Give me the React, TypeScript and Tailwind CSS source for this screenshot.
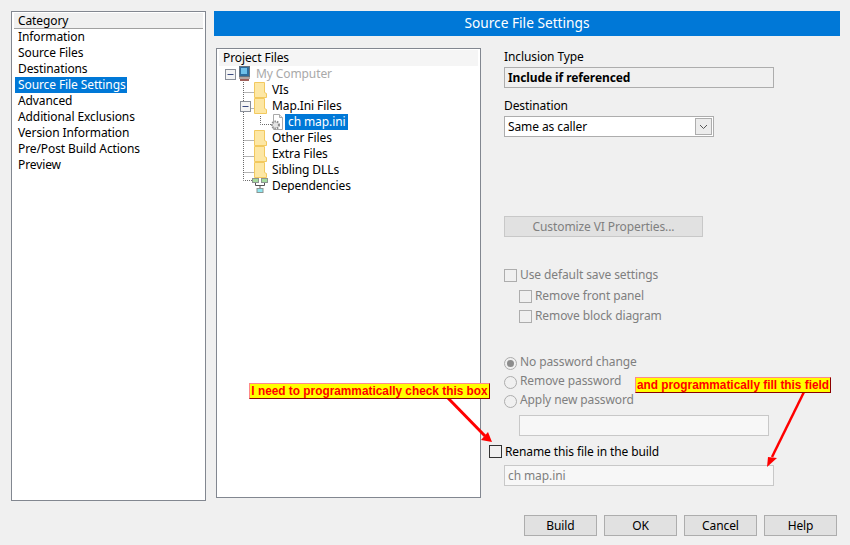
const font = 'font-["Tahoma","Noto_Sans",sans-serif]';

const categories = [
  'Information',
  'Source Files',
  'Destinations',
  'Source File Settings',
  'Advanced',
  'Additional Exclusions',
  'Version Information',
  'Pre/Post Build Actions',
  'Preview',
];

function Folder() {
  return (
    <svg width="14" height="16" viewBox="0 0 14 16" className="shrink-0">
      <path d="M0.5 0.5H10.5V10.5L12.5 11.5V15.5H0.5Z" fill="#fde7a4" stroke="#f2c95f" />
    </svg>
  );
}

function Expander({ className }: { className: string }) {
  return (
    <svg width="11" height="11" viewBox="0 0 11 11" className={className}>
      <rect x="0.5" y="0.5" width="10" height="10" fill="#f4f4f4" stroke="#8a8f99" />
      <path d="M2.5 5.5H8.5" stroke="#3a4a80" />
    </svg>
  );
}

function ComputerIcon() {
  return (
    <svg width="15" height="16" viewBox="0 0 15 16" className="shrink-0">
      <rect x="2.5" y="0.5" width="10" height="10" fill="#2f6d9e" stroke="#66727e" />
      <rect x="4" y="2" width="6" height="6" fill="#6fc0ea" />
      <rect x="2" y="11" width="11" height="2" fill="#b3a6a3" />
      <rect x="3" y="13" width="9" height="2" fill="#a0605a" />
    </svg>
  );
}

function FileGearIcon() {
  return (
    <svg width="14" height="16" viewBox="0 0 14 16" className="shrink-0">
      <path d="M3.5 0.5H9.5L12.5 3.5V15.5H3.5Z" fill="#fff" stroke="#a9a9a9" />
      <path d="M9.5 0.5V3.5H12.5" fill="#e6e6e6" stroke="#a9a9a9" />
      <circle cx="5.5" cy="11" r="3.5" fill="#e4e4e4" stroke="#8c8c8c" strokeWidth="2" strokeDasharray="1.5 1" />
    </svg>
  );
}

function DependenciesIcon() {
  return (
    <svg width="16" height="16" viewBox="0 0 16 16" className="shrink-0">
      <path d="M3.5 5V7.5H12.5V5M8 7.5V10" fill="none" stroke="#555" />
      <rect x="0.5" y="0.5" width="6" height="4" fill="#a5dc9e" stroke="#8c9490" />
      <rect x="9.5" y="0.5" width="6" height="4" fill="#a5dc9e" stroke="#8c9490" />
      <rect x="5" y="10.5" width="6" height="4" fill="#8fe6f0" stroke="#8c9490" />
    </svg>
  );
}

function TreeRow({ icon, label, indent, muted, selected }: {
  icon: React.ReactNode;
  label: string;
  indent: string;
  muted?: boolean;
  selected?: boolean;
}) {
  return (
    <div className={`flex h-4 items-center ${indent}`}>
      {icon}
      <span className={`ml-px h-4 px-[3px] leading-4 ${selected ? 'bg-[#0078d7] text-white' : muted ? 'text-[#a9a9a9]' : 'text-black'}`}>
        {label}
      </span>
    </div>
  );
}

function DisabledCheck({ label, className }: { label: string; className: string }) {
  return (
    <div className={`flex h-4 items-center text-[#7f7f7f] ${className}`}>
      <span className="mr-[3px] h-[13px] w-[13px] shrink-0 border border-[#adadad] bg-[#f0f0f0]" />
      {label}
    </div>
  );
}

function DisabledRadio({ label, checked }: { label: string; checked?: boolean }) {
  return (
    <div className="flex h-[19px] items-center text-[#7f7f7f]">
      <span className="mr-[3px] mt-[2px] flex h-[13px] w-[13px] shrink-0 items-center justify-center rounded-full border border-[#adadad] bg-[#f0f0f0]">
        {checked && <span className="h-[7px] w-[7px] rounded-full bg-[#8c8c8c]" />}
      </span>
      <span className="-mt-[2px]">{label}</span>
    </div>
  );
}

function DialogButton({ label }: { label: string }) {
  return (
    <button className="h-[21px] w-[73px] border border-[#adadad] bg-[#e1e1e1] text-black">{label}</button>
  );
}

function Callout({ label, className }: { label: string; className: string }) {
  return (
    <div className={`absolute flex h-[16px] items-center justify-center whitespace-nowrap border border-t-[#ff8a8a] border-l-[#ff8a8a] border-r-[#8b0000] border-b-[#8b0000] bg-[#ffff00] font-["Liberation_Sans",sans-serif] text-[11.85px] font-bold tracking-normal text-[#ff0000] ${className}`}>
      {label}
    </div>
  );
}

export default function App() {
  return (
    <div className={`relative flex h-[545px] w-[850px] flex-col overflow-hidden bg-[#f0f0f0] pl-[11px] pr-[10px] pt-[11px] text-[12px] leading-4 tracking-[-0.1px] text-black ${font}`}>
      <div className="flex h-[490px]">
        <div className="h-[490px] w-[195px] shrink-0 border border-[#828790] bg-white px-[2px] pt-px">
          <div className="h-[16px] border-b border-[#a0a0a0] bg-[#f0f0f0] pl-[4px] leading-[16px]">Category</div>
          {categories.map((c) => (
            <div key={c} className="h-4 leading-4">
              <span className={`ml-px inline-block h-4 pl-[3px] pr-px ${c === 'Source File Settings' ? 'bg-[#0078d7] text-white' : ''}`}>{c}</span>
            </div>
          ))}
        </div>

        <div className="ml-[8px] flex min-w-0 flex-1 flex-col">
          <div className="flex h-[25px] items-center justify-center bg-[#0078d7] pb-px text-[13.7px] tracking-normal text-white">Source File Settings</div>

          <div className="mt-[12px] flex h-[450px]">
            <div className="ml-[2px] h-[450px] w-[265px] shrink-0 border border-[#828790] bg-white px-[2px] pt-px">
              <div className="h-[16px] bg-[#f5f5f5] pl-[4px] leading-[16px]">Project Files</div>
              <div className="relative">
                <svg width="60" height="124" viewBox="0 0 60 124" className="absolute left-0 top-0">
                  <path d="M24.5 10V114.5H33M24.5 26.5H35M28.5 42.5H35M24.5 74.5H35M24.5 90.5H35M24.5 106.5H35M41.5 50V58.5H52" fill="none" stroke="#6b6b6b" strokeDasharray="1 1" />
                </svg>
                <div className="relative">
                  <TreeRow icon={<ComputerIcon />} label="My Computer" indent="pl-[18px]" muted />
                  <TreeRow icon={<Folder />} label="VIs" indent="pl-[35px]" />
                  <TreeRow icon={<Folder />} label="Map.Ini Files" indent="pl-[35px]" />
                  <TreeRow icon={<FileGearIcon />} label="ch map.ini" indent="pl-[51px]" selected />
                  <TreeRow icon={<Folder />} label="Other Files" indent="pl-[35px]" />
                  <TreeRow icon={<Folder />} label="Extra Files" indent="pl-[35px]" />
                  <TreeRow icon={<Folder />} label="Sibling DLLs" indent="pl-[35px]" />
                  <TreeRow icon={<DependenciesIcon />} label="Dependencies" indent="pl-[33px]" />
                  <Expander className="absolute left-[6px] top-[3px]" />
                  <Expander className="absolute left-[21px] top-[35px]" />
                </div>
              </div>
            </div>

            <div className="ml-[23px] flex min-w-0 flex-1 flex-col">
              <div className="h-4 pt-px">Inclusion Type</div>
              <div className="mt-[3px] h-[21px] w-[270px] border border-[#adadad] bg-[#f0f0f0] pl-[3px] font-bold leading-[19px]">Include if referenced</div>
              <div className="mt-[10px] h-4">Destination</div>
              <div className="mt-[2px] flex h-[21px] w-[210px] items-center justify-between border border-[#adadad] bg-white pl-[3px] pr-px">
                Same as caller
                <span className="flex h-[17px] w-[17px] items-center justify-center border border-[#adadad] bg-[#ececec]">
                  <svg width="9" height="6" viewBox="0 0 9 6"><path d="M1 1L4.5 4.5L8 1" fill="none" stroke="#555" /></svg>
                </span>
              </div>
              <div className="mt-[79px] flex h-[21px] w-[199px] items-center justify-center border border-[#c8c8c8] bg-[#e1e1e1] text-[#7f7f7f]">Customize VI Properties...</div>
              <DisabledCheck label="Use default save settings" className="mt-[30px] h-[16px]" />
              <DisabledCheck label="Remove front panel" className="ml-[15px] mt-[5px]" />
              <DisabledCheck label="Remove block diagram" className="ml-[15px] mt-[4px]" />
              <div className="mt-[29px]">
                <DisabledRadio label="No password change" checked />
                <DisabledRadio label="Remove password" />
                <DisabledRadio label="Apply new password" />
              </div>
              <div className="ml-[15px] mt-[5px] h-[21px] w-[250px] border border-[#c8c8c8] bg-[#f7f7f7]" />
              <div className="-ml-[15px] mt-[8px] flex h-4 items-center">
                <span className="mb-[2px] mr-[3px] h-[13px] w-[13px] shrink-0 border border-[#333333] bg-[#f0f0f0]" />
                Rename this file in the build
              </div>
              <div className="mt-[5px] h-[21px] w-[270px] border border-[#c8c8c8] bg-[#f7f7f7] pl-[3px] leading-[19px] text-[#7f7f7f]">ch map.ini</div>
            </div>
          </div>
        </div>
      </div>

      <div className="mt-[14px] flex justify-end gap-[7px] pr-[3px]">
        <DialogButton label="Build" />
        <DialogButton label="OK" />
        <DialogButton label="Cancel" />
        <DialogButton label="Help" />
      </div>

      <svg width="850" height="545" viewBox="0 0 850 545" className="pointer-events-none absolute left-0 top-0">
        <path d="M446 396L485 436" stroke="#ff0000" strokeWidth="3" />
        <path d="M492 442L481 440L488 432Z" fill="#ff0000" />
        <path d="M804 392L772 457" stroke="#ff0000" strokeWidth="2.5" />
        <path d="M767 467L768 457L777 458Z" fill="#ff0000" />
      </svg>
      <Callout label="I need to programmatically check this box" className="left-[249px] top-[383px] w-[241px]" />
      <Callout label="and programmatically fill this field" className="left-[635px] top-[377px] w-[196px]" />
    </div>
  );
}
